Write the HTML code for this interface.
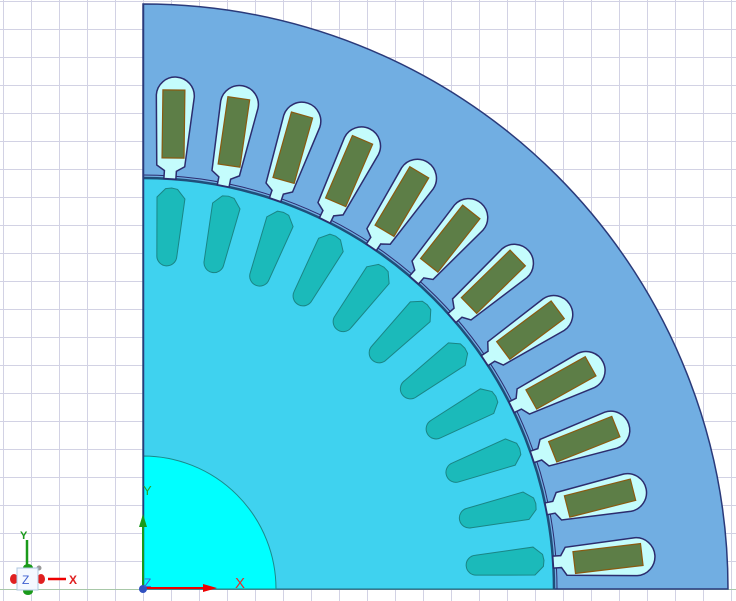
<!DOCTYPE html>
<html><head><meta charset="utf-8"><style>
html,body{margin:0;padding:0;background:#fff;width:736px;height:601px;overflow:hidden}
svg{display:block}
</style></head><body>
<svg width="736" height="601" viewBox="0 0 736 601" xmlns="http://www.w3.org/2000/svg">
<defs>
<pattern id="g" x="3" y="1" width="28" height="28" patternUnits="userSpaceOnUse">
<path d="M0 0.5H28M0.5 0V28" stroke="#d2d2e4" stroke-width="1" fill="none"/>
</pattern>
<g id="ss">
<path d="M411 -6 L419 -6 L424 -14 L494 -19 A19 19 0 0 1 494 19 L424 14 L419 6 L411 6 Z" fill="#c4fcfc" stroke="#2c2c6e" stroke-width="1.5"/>
<rect x="432" y="-11" width="68" height="22" fill="#5d7e47" stroke="#8a5a10" stroke-width="1.2" transform="rotate(-3 466 0)"/>
</g>
<path id="rs" d="M334 -10 L392 -14 L401 -6 L402 0 L401 6 L392 14 L334 10 A10 10 0 0 1 334 -10 Z" fill="#1bbaba" stroke="#1a8585" stroke-width="1"/>
</defs>
<rect x="0" y="0" width="736" height="601" fill="url(#g)"/>
<path d="M0 589.5H736" stroke="#a8c8a8" stroke-width="1"/>
<path d="M143 589 L728 589 A585 585 0 0 0 143 4 Z" fill="#71aee2" stroke="#2a3a7a" stroke-width="1.5"/>
<path d="M143 589 L554 589 A411 411 0 0 0 143 178 Z" fill="#3fd2ef" stroke="#1a6a80" stroke-width="1"/>
<path d="M554 589 A411 411 0 0 0 143 178" fill="none" stroke="#1f4f7a" stroke-width="2.5"/>
<path d="M557 589 A414 414 0 0 0 143 175" fill="none" stroke="#2c2c6e" stroke-width="1"/>
<g transform="translate(143 589)">
<use href="#rs" transform="rotate(-4.09)"/>
<use href="#rs" transform="rotate(-12.27)"/>
<use href="#rs" transform="rotate(-20.45)"/>
<use href="#rs" transform="rotate(-28.64)"/>
<use href="#rs" transform="rotate(-36.82)"/>
<use href="#rs" transform="rotate(-45)"/>
<use href="#rs" transform="rotate(-53.18)"/>
<use href="#rs" transform="rotate(-61.36)"/>
<use href="#rs" transform="rotate(-69.55)"/>
<use href="#rs" transform="rotate(-77.73)"/>
<use href="#rs" transform="rotate(-85.91)"/>
<use href="#ss" transform="rotate(-3.75)"/>
<use href="#ss" transform="rotate(-11.25)"/>
<use href="#ss" transform="rotate(-18.75)"/>
<use href="#ss" transform="rotate(-26.25)"/>
<use href="#ss" transform="rotate(-33.75)"/>
<use href="#ss" transform="rotate(-41.25)"/>
<use href="#ss" transform="rotate(-48.75)"/>
<use href="#ss" transform="rotate(-56.25)"/>
<use href="#ss" transform="rotate(-63.75)"/>
<use href="#ss" transform="rotate(-71.25)"/>
<use href="#ss" transform="rotate(-78.75)"/>
<use href="#ss" transform="rotate(-86.25)"/>
</g>
<path d="M143 589 L276 589 A133 133 0 0 0 143 456 Z" fill="#00ffff" stroke="#1a8a8a" stroke-width="1"/>
<path d="M143.5 4 V589" stroke="#2a3a7a" stroke-width="1.5"/>
<line x1="143" y1="589" x2="143" y2="525" stroke="#1a9a1a" stroke-width="2"/>
<path d="M139 527 L143 514 L147 527 Z" fill="#1a9a1a"/>
<line x1="143" y1="588" x2="205" y2="588" stroke="#e00" stroke-width="2"/>
<path d="M203 584 L217 588 L203 592 Z" fill="#e00"/>
<circle cx="143" cy="589" r="4" fill="#3050c0"/>
<text x="143" y="495" font-family="Liberation Sans, sans-serif" font-size="13" fill="#2aa02a">Y</text>
<text x="235" y="588" font-family="Liberation Sans, sans-serif" font-size="15" fill="#e03030">X</text>
<text x="144" y="587" font-family="Liberation Sans, sans-serif" font-size="12" fill="#4060d0">Z</text>
<line x1="27" y1="565" x2="27" y2="540" stroke="#1a9a1a" stroke-width="2.5"/>
<text x="20" y="539" font-family="Liberation Sans, sans-serif" font-size="11" font-weight="bold" fill="#1a9a1a">Y</text>
<ellipse cx="28" cy="568" rx="5" ry="4" fill="#1a9a1a"/>
<ellipse cx="28" cy="591" rx="5" ry="4" fill="#1a9a1a"/>
<ellipse cx="14" cy="579" rx="4" ry="5" fill="#e02020"/>
<ellipse cx="41" cy="579" rx="4" ry="5" fill="#e02020"/>
<circle cx="39" cy="568" r="2.5" fill="#999"/>
<line x1="48" y1="579" x2="66" y2="579" stroke="#e00" stroke-width="2.5"/>
<text x="69" y="584" font-family="Liberation Sans, sans-serif" font-size="12" font-weight="bold" fill="#e02020">X</text>
<rect x="17" y="568" width="21" height="22" fill="#f4f8ff" stroke="#b0c8e0"/>
<text x="22" y="584" font-family="Liberation Sans, sans-serif" font-size="12" fill="#4060d0">Z</text>
</svg>
</body></html>
